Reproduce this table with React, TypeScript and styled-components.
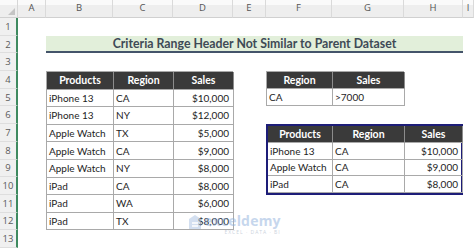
import styled, { createGlobalStyle } from "styled-components";

const COLS = ["A", "B", "C", "D", "E", "F", "G", "H", "I"];
const ROWS = Array.from({ length: 13 }, (_, i) => i + 1);

type Row = string[];

const products: Row[] = [
  ["iPhone 13", "CA", "$10,000"],
  ["iPhone 13", "NY", "$12,000"],
  ["Apple Watch", "TX", "$5,000"],
  ["Apple Watch", "CA", "$9,000"],
  ["Apple Watch", "NY", "$8,000"],
  ["iPad", "CA", "$8,000"],
  ["iPad", "WA", "$6,000"],
  ["iPad", "TX", "$8,000"],
];

const filtered: Row[] = [
  ["iPhone 13", "CA", "$10,000"],
  ["Apple Watch", "CA", "$9,000"],
  ["iPad", "CA", "$8,000"],
];

const GlobalStyle = createGlobalStyle`
  html, body {
    margin: 0;
    padding: 0;
    background: #ffffff;
  }
  body {
    font-family: Lato, "Open Sans", sans-serif;
    overflow: hidden;
  }
`;

const Sheet = styled.div`
  display: grid;
  grid-template-columns: 18px 28px 67px 60px 60px 33px 66px 72px 59px 1fr;
  grid-template-rows: 18px repeat(13, 17.7px);
  width: 474px;
  height: 248px;
  position: relative;
  background: #ffffff;
`;

const Corner = styled.div`
  grid-column: 1;
  grid-row: 1;
  position: relative;
  background: linear-gradient(#fafafa 0 28%, #eeeeee 28%);
  border-bottom: 1px solid #d0d0d0;
  border-right: 1px solid #d6d6d6;

  &::after {
    content: "";
    position: absolute;
    right: 2px;
    bottom: 2px;
    border-left: 7px solid transparent;
    border-bottom: 7px solid #c4c4c4;
  }
`;

const ColHead = styled.div<{ $col: number }>`
  grid-column: ${({ $col }) => $col};
  grid-row: 1;
  display: flex;
  align-items: flex-end;
  justify-content: center;
  padding-bottom: 3px;
  box-sizing: border-box;
  background: linear-gradient(#fafafa 0 28%, #eeeeee 28%);
  border-bottom: 1px solid #d0d0d0;
  border-right: 1px solid #dadada;
  font-family: "Open Sans", sans-serif;
  font-size: 9.5px;
  color: #555555;
`;

const RowHead = styled.div<{ $row: number }>`
  grid-column: 1;
  grid-row: ${({ $row }) => $row + 1};
  display: flex;
  align-items: center;
  justify-content: center;
  box-sizing: border-box;
  background: #f0f0f0;
  border-bottom: 1px solid #dedede;
  border-right: 2px solid #3f8a60;
  font-family: "Open Sans", sans-serif;
  font-size: 9.5px;
  color: #5a5a5a;
`;

const Title = styled.div`
  grid-column: 3 / 10;
  grid-row: 3;
  display: flex;
  align-items: center;
  justify-content: center;
  box-sizing: border-box;
  background: #e2efda;
  border-bottom: 2px solid #44546a;
  font-family: Lato, sans-serif;
  font-weight: 700;
  font-size: 12.3px;
  color: #3e4a56;
`;

const Table = styled.div<{ $col: string; $row: string; $cols: string; $strong?: boolean }>`
  grid-column: ${({ $col }) => $col};
  grid-row: ${({ $row }) => $row};
  display: grid;
  grid-template-columns: ${({ $cols }) => $cols};
  grid-auto-rows: 1fr;
  box-sizing: border-box;
  border: ${({ $strong }) => ($strong ? "2px solid #1d1d78" : "none")};
  border-left: ${({ $strong }) => ($strong ? "2px solid #1d1d78" : "1px solid #a9a9a9")};
  border-top: ${({ $strong }) => ($strong ? "2px solid #1d1d78" : "1px solid #a9a9a9")};
`;

const HeadCell = styled.div`
  display: flex;
  align-items: center;
  justify-content: center;
  background: #3a3a3a;
  color: #ffffff;
  font-weight: 700;
  font-size: 10.5px;
  border-right: 1px solid #8c8c8c;
  border-bottom: 1px solid #a9a9a9;

  &:last-child {
    border-right-color: #a9a9a9;
  }
`;

const Cell = styled.div<{ $right?: boolean }>`
  display: flex;
  align-items: center;
  justify-content: ${({ $right }) => ($right ? "flex-end" : "flex-start")};
  padding: 0 4px 0 2px;
  box-sizing: border-box;
  font-size: 10px;
  color: #1e1e1e;
  border-right: 1px solid #a9a9a9;
  border-bottom: 1px solid #a9a9a9;
  white-space: nowrap;
`;

const Watermark = styled.div`
  position: absolute;
  left: 188px;
  top: 214px;
  display: flex;
  align-items: flex-start;
  gap: 2px;
  opacity: 0.5;
  pointer-events: none;
`;

const MarkText = styled.div`
  display: flex;
  flex-direction: column;
  align-items: flex-end;
  line-height: 1;
`;

const MarkName = styled.span`
  font-family: "Open Sans", sans-serif;
  font-weight: 700;
  font-size: 14px;
  color: #8fb0dc;
  letter-spacing: 0.2px;
`;

const MarkSub = styled.span`
  font-family: "Open Sans", sans-serif;
  font-size: 5px;
  letter-spacing: 1px;
  color: #9aa9bd;
  margin-top: 2px;
`;

const ProductTable = ({
  col,
  row,
  cols,
  rows,
  strong,
}: {
  col: string;
  row: string;
  cols: string;
  rows: Row[];
  strong?: boolean;
}) => (
  <Table $col={col} $row={row} $cols={cols} $strong={strong}>
    <HeadCell>Products</HeadCell>
    <HeadCell>Region</HeadCell>
    <HeadCell>Sales</HeadCell>
    {rows.map((r, i) => [
      <Cell key={`${i}p`}>{r[0]}</Cell>,
      <Cell key={`${i}r`}>{r[1]}</Cell>,
      <Cell key={`${i}s`} $right>
        {r[2]}
      </Cell>,
    ])}
  </Table>
);

export default function App() {
  return (
    <>
      <GlobalStyle />
      <Sheet>
        <Corner />
        {COLS.map((c, i) => (
          <ColHead key={c} $col={i + 2}>
            {c}
          </ColHead>
        ))}
        {ROWS.map((r) => (
          <RowHead key={r} $row={r}>
            {r}
          </RowHead>
        ))}

        <Title>Criteria Range Header Not Similar to Parent Dataset</Title>

        <ProductTable col="3 / 6" row="5 / 14" cols="67px 60px 60px" rows={products} />

        <Table $col="7 / 9" $row="5 / 7" $cols="66px 72px">
          <HeadCell>Region</HeadCell>
          <HeadCell>Sales</HeadCell>
          <Cell>CA</Cell>
          <Cell>&gt;7000</Cell>
        </Table>

        <ProductTable
          col="7 / 10"
          row="8 / 12"
          cols="65px 72px 58px"
          rows={filtered}
          strong
        />

        <Watermark>
          <svg width="14" height="16" viewBox="0 0 14 16">
            <path d="M7 1 L13 5 V15 H1 V5 Z" fill="#a9c1e2" />
            <path d="M4 9 H10 M4 12 H10" stroke="#ffffff" strokeWidth="1.4" />
          </svg>
          <MarkText>
            <MarkName>exceldemy</MarkName>
            <MarkSub>EXCEL · DATA · BI</MarkSub>
          </MarkText>
        </Watermark>
      </Sheet>
    </>
  );
}
